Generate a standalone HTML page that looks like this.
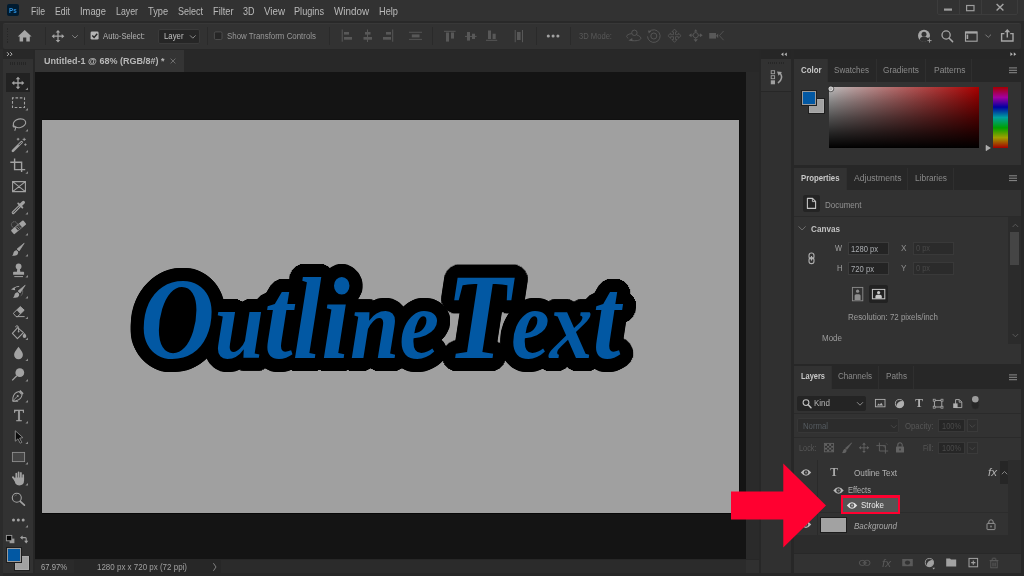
<!DOCTYPE html>
<html lang="en"><head><meta charset="utf-8"><title>Photoshop - Outline Text</title>
<style>
html,body{margin:0;padding:0;}
body{width:1024px;height:576px;overflow:hidden;background:#272727;position:relative;font-family:"Liberation Sans",sans-serif;}
.r{position:absolute;}
.t{position:absolute;white-space:nowrap;line-height:1;transform-origin:0 50%;font-family:"Liberation Sans",sans-serif;}
.s{font-family:"Liberation Serif",serif;}
.i{position:absolute;overflow:visible;}
#app{position:absolute;left:0;top:0;width:1024px;height:576px;will-change:transform;}
</style></head>
<body>
<div id="app">
<div class="r" style="left:0px;top:0px;width:1024px;height:21px;background:#323232;"></div>
<div class="r" style="left:0px;top:21px;width:1024px;height:28px;background:#292929;"></div>
<div class="r" style="left:2.6px;top:22.6px;width:1018.8px;height:26.2px;background:#323232;border-top:1px solid #383838;box-sizing:border-box;border-radius:2px;"></div>
<div class="r" style="left:936.8px;top:-1px;width:81.7px;height:15.5px;background:#323232;border:1px solid #3c3c3c;box-sizing:border-box;border-radius:0 0 2px 2px;"></div>
<div class="r" style="left:959px;top:0px;width:1px;height:14px;background:#3c3c3c;"></div>
<div class="r" style="left:981px;top:0px;width:1px;height:14px;background:#3c3c3c;"></div>
<div class="r" style="left:0px;top:49px;width:1024px;height:527px;background:#272727;"></div>
<div class="r" style="left:0px;top:49px;width:3px;height:527px;background:#2b2b2b;"></div>
<div class="r" style="left:3px;top:50px;width:30px;height:8.5px;background:#282828;"></div>
<div class="r" style="left:3px;top:59px;width:30px;height:514px;background:#323232;"></div>
<div class="r" style="left:35px;top:49.5px;width:724px;height:22.7px;background:#282828;"></div>
<div class="r" style="left:35px;top:49.5px;width:149px;height:22.7px;background:#343434;"></div>
<div class="r" style="left:35px;top:72.2px;width:711px;height:487.3px;background:#141414;"></div>
<div class="r" style="left:746px;top:72.2px;width:13px;height:487.3px;background:#2a2a2a;"></div>
<div class="r" style="left:35px;top:559.5px;width:724px;height:13.5px;background:#2b2b2b;"></div>
<div class="r" style="left:746px;top:559.5px;width:13px;height:13.5px;background:#303030;"></div>
<div class="r" style="left:35px;top:559.5px;width:38.5px;height:13.5px;background:#2a2a2a;"></div>
<div class="r" style="left:73.5px;top:559.5px;width:147.5px;height:13.5px;background:#272727;"></div>
<div class="r" style="left:42px;top:120px;width:697px;height:393px;background:#a0a0a0;box-shadow:0 1px 0 0 #080808,1px 0 0 0 #0c0c0c,-1px 0 0 0 #101010,0 -1px 0 0 #101010;"></div>
<div class="r" style="left:761.3px;top:49.5px;width:29.9px;height:9.0px;background:#262626;"></div>
<div class="r" style="left:761.3px;top:59px;width:29.9px;height:31.8px;background:#323232;"></div>
<div class="r" style="left:761.3px;top:92px;width:29.9px;height:481px;background:#303030;"></div>
<div class="r" style="left:794px;top:49.5px;width:227px;height:9.0px;background:#262626;"></div>
<div class="r" style="left:794px;top:59px;width:227.3px;height:22.5px;background:#272727;"></div>
<div class="r" style="left:794px;top:59px;width:33px;height:22.5px;background:#323232;"></div>
<div class="r" style="left:794px;top:81.5px;width:227px;height:83.5px;background:#323232;"></div>
<div class="r" style="left:794px;top:167.5px;width:227px;height:22.0px;background:#272727;"></div>
<div class="r" style="left:794px;top:167.5px;width:52px;height:22.0px;background:#323232;"></div>
<div class="r" style="left:794px;top:189.5px;width:227px;height:174.0px;background:#323232;"></div>
<div class="r" style="left:794px;top:366px;width:227px;height:22.5px;background:#272727;"></div>
<div class="r" style="left:794px;top:366px;width:37px;height:22.5px;background:#323232;"></div>
<div class="r" style="left:794px;top:388.5px;width:227px;height:184.5px;background:#323232;"></div>
<div class="r" style="left:826.5px;top:59px;width:1.0px;height:22.5px;background:#2f2f2f;"></div>
<div class="r" style="left:875.5px;top:59px;width:1.0px;height:22.5px;background:#2f2f2f;"></div>
<div class="r" style="left:925.0px;top:59px;width:1.0px;height:22.5px;background:#2f2f2f;"></div>
<div class="r" style="left:971.0px;top:59px;width:1.0px;height:22.5px;background:#2f2f2f;"></div>
<div class="r" style="left:845.5px;top:167.5px;width:1.0px;height:22.0px;background:#2f2f2f;"></div>
<div class="r" style="left:906.5px;top:167.5px;width:1.0px;height:22.0px;background:#2f2f2f;"></div>
<div class="r" style="left:953.0px;top:167.5px;width:1.0px;height:22.0px;background:#2f2f2f;"></div>
<div class="r" style="left:830.5px;top:366px;width:1.0px;height:22.5px;background:#2f2f2f;"></div>
<div class="r" style="left:878.0px;top:366px;width:1.0px;height:22.5px;background:#2f2f2f;"></div>
<div class="r" style="left:913.0px;top:366px;width:1.0px;height:22.5px;background:#2f2f2f;"></div>
<div class="r" style="left:6.5px;top:4.2px;width:12.5px;height:12.0px;background:#001b30;border-radius:2px;"></div>
<div class="r" style="left:44.5px;top:27px;width:1.0px;height:18px;background:#2a2a2a;"></div>
<div class="r" style="left:83.5px;top:27px;width:1.0px;height:18px;background:#2a2a2a;"></div>
<div class="r" style="left:206.5px;top:27px;width:1.0px;height:18px;background:#2a2a2a;"></div>
<div class="r" style="left:329.0px;top:27px;width:1.0px;height:18px;background:#2a2a2a;"></div>
<div class="r" style="left:432.0px;top:27px;width:1.0px;height:18px;background:#2a2a2a;"></div>
<div class="r" style="left:535.5px;top:27px;width:1.0px;height:18px;background:#2a2a2a;"></div>
<div class="r" style="left:570.0px;top:27px;width:1.0px;height:18px;background:#2a2a2a;"></div>
<div class="r" style="left:157.5px;top:29px;width:42.5px;height:15px;background:#262626;border:1px solid #3a3a3a;box-sizing:border-box;border-radius:2px;"></div>
<div class="r" style="left:807.5px;top:97.5px;width:17.5px;height:16.5px;background:#1e1e1e;"></div>
<div class="r" style="left:808.5px;top:98.5px;width:15.5px;height:14.5px;background:#a2a2a2;border:1px solid #acacac;box-sizing:border-box;"></div>
<div class="r" style="left:800.5px;top:89.5px;width:16.5px;height:16.5px;background:#1e1e1e;"></div>
<div class="r" style="left:801.5px;top:90.5px;width:14.5px;height:14.5px;background:#0258a3;border:1px solid #9a9a9a;box-sizing:border-box;"></div>
<div class="r" style="left:829px;top:87px;width:150px;height:61px;background:#000;background:linear-gradient(to bottom,rgba(0,0,0,0) 0%,rgba(0,0,0,0.3) 25%,rgba(0,0,0,0.57) 50%,rgba(0,0,0,0.8) 75%,#000 100%),linear-gradient(to right,#bcbcbc,#a80000);"></div>
<div class="r" style="left:993px;top:87px;width:15px;height:61px;background:#000;background:linear-gradient(to bottom,#a40000 0%,#a400a0 17%,#0000a0 33%,#00a0a0 50%,#00a000 67%,#a0a000 83%,#a40000 100%);"></div>
<div class="r" style="left:802.5px;top:195px;width:17.5px;height:17px;background:#242424;border-radius:2px;"></div>
<div class="r" style="left:794px;top:215.5px;width:227px;height:1.0px;background:#2a2a2a;"></div>
<div class="r" style="left:1008px;top:217px;width:13px;height:126.5px;background:#2b2b2b;"></div>
<div class="r" style="left:1009.5px;top:231.5px;width:9.5px;height:33.5px;background:#454545;"></div>
<div class="r" style="left:847.5px;top:241.5px;width:41.5px;height:13.0px;background:#242424;border:1px solid #3c3c3c;box-sizing:border-box;"></div>
<div class="r" style="left:847.5px;top:261.5px;width:41.5px;height:13.0px;background:#242424;border:1px solid #3c3c3c;box-sizing:border-box;"></div>
<div class="r" style="left:912.5px;top:241.5px;width:41.5px;height:13.0px;background:#2b2b2b;border:1px solid #393939;box-sizing:border-box;"></div>
<div class="r" style="left:912.5px;top:261.5px;width:41.5px;height:13.0px;background:#2b2b2b;border:1px solid #393939;box-sizing:border-box;"></div>
<div class="r" style="left:869px;top:284.5px;width:19px;height:18.5px;background:#222222;border-radius:2px;"></div>
<div class="r" style="left:797px;top:396px;width:68.5px;height:15px;background:#242424;border-radius:2px;"></div>
<div class="r" style="left:794px;top:413px;width:227px;height:1px;background:#2a2a2a;"></div>
<div class="r" style="left:797px;top:418px;width:102px;height:15px;background:#2c2c2c;border:1px solid #373737;box-sizing:border-box;border-radius:2px;"></div>
<div class="r" style="left:938px;top:419px;width:27px;height:12.5px;background:#262626;border:1px solid #383838;box-sizing:border-box;"></div>
<div class="r" style="left:967px;top:419px;width:10.5px;height:12.5px;background:#2e2e2e;border:1px solid #3a3a3a;box-sizing:border-box;"></div>
<div class="r" style="left:794px;top:436.5px;width:227px;height:1.0px;background:#2a2a2a;"></div>
<div class="r" style="left:938px;top:442px;width:27px;height:12px;background:#262626;border:1px solid #383838;box-sizing:border-box;"></div>
<div class="r" style="left:967px;top:442px;width:10.5px;height:12px;background:#2e2e2e;border:1px solid #3a3a3a;box-sizing:border-box;"></div>
<div class="r" style="left:794px;top:459.5px;width:227px;height:93.5px;background:#2c2c2c;"></div>
<div class="r" style="left:794px;top:460px;width:213.7px;height:52.3px;background:#323232;"></div>
<div class="r" style="left:794px;top:513px;width:213.7px;height:22px;background:#323232;"></div>
<div class="r" style="left:817px;top:460px;width:1px;height:74.5px;background:#2a2a2a;"></div>
<div class="r" style="left:1000px;top:460.5px;width:7.7px;height:23.5px;background:#262626;"></div>
<div class="r" style="left:1007.7px;top:459.5px;width:13.3px;height:93.5px;background:#2c2c2c;"></div>
<div class="r" style="left:840.5px;top:495px;width:59.5px;height:19px;background:#ff0030;"></div>
<div class="r" style="left:843px;top:497.5px;width:54.5px;height:14.0px;background:#555555;"></div>
<div class="r" style="left:820px;top:516.5px;width:27px;height:16.5px;background:#1c1c1c;"></div>
<div class="r" style="left:821px;top:517.5px;width:25px;height:14.5px;background:#a2a2a2;"></div>
<div class="r" style="left:794px;top:553px;width:227px;height:1px;background:#282828;"></div>
<div class="r" style="left:794px;top:554px;width:227px;height:19px;background:#323232;"></div>
<div class="r" style="left:10.2px;top:62.3px;width:1.0px;height:2.3px;background:#252525;"></div>
<div class="r" style="left:12.299999999999999px;top:62.3px;width:1.0px;height:2.3px;background:#252525;"></div>
<div class="r" style="left:14.399999999999999px;top:62.3px;width:1.0px;height:2.3px;background:#252525;"></div>
<div class="r" style="left:16.5px;top:62.3px;width:1.0px;height:2.3px;background:#252525;"></div>
<div class="r" style="left:18.6px;top:62.3px;width:1.0px;height:2.3px;background:#252525;"></div>
<div class="r" style="left:20.7px;top:62.3px;width:1.0px;height:2.3px;background:#252525;"></div>
<div class="r" style="left:22.8px;top:62.3px;width:1.0px;height:2.3px;background:#252525;"></div>
<div class="r" style="left:24.9px;top:62.3px;width:1.0px;height:2.3px;background:#252525;"></div>
<div class="r" style="left:6px;top:73px;width:24px;height:18.5px;background:#222222;"></div>
<div class="r" style="left:14px;top:555.5px;width:15.5px;height:15.0px;background:#1e1e1e;"></div>
<div class="r" style="left:14.8px;top:556.3px;width:14.0px;height:13.5px;background:#a2a2a2;border:1px solid #acacac;box-sizing:border-box;"></div>
<div class="r" style="left:5.8px;top:547.3px;width:15.8px;height:15.4px;background:#1e1e1e;"></div>
<div class="r" style="left:6.6px;top:548px;width:14.3px;height:14px;background:#0258a3;border:1px solid #9a9a9a;box-sizing:border-box;"></div>
<div class="r" style="left:6.6px;top:28.4px;width:1.0px;height:1.2px;background:#262626;"></div>
<div class="r" style="left:6.6px;top:31.0px;width:1.0px;height:1.2px;background:#262626;"></div>
<div class="r" style="left:6.6px;top:33.6px;width:1.0px;height:1.2px;background:#262626;"></div>
<div class="r" style="left:6.6px;top:36.2px;width:1.0px;height:1.2px;background:#262626;"></div>
<div class="r" style="left:6.6px;top:38.8px;width:1.0px;height:1.2px;background:#262626;"></div>
<div class="r" style="left:6.6px;top:41.4px;width:1.0px;height:1.2px;background:#262626;"></div>
<div class="r" style="left:768.0px;top:62.3px;width:1.0px;height:2.1px;background:#262626;"></div>
<div class="r" style="left:770.1px;top:62.3px;width:1.0px;height:2.1px;background:#262626;"></div>
<div class="r" style="left:772.2px;top:62.3px;width:1.0px;height:2.1px;background:#262626;"></div>
<div class="r" style="left:774.3px;top:62.3px;width:1.0px;height:2.1px;background:#262626;"></div>
<div class="r" style="left:776.4px;top:62.3px;width:1.0px;height:2.1px;background:#262626;"></div>
<div class="r" style="left:778.5px;top:62.3px;width:1.0px;height:2.1px;background:#262626;"></div>
<div class="r" style="left:780.6px;top:62.3px;width:1.0px;height:2.1px;background:#262626;"></div>
<div class="r" style="left:782.7px;top:62.3px;width:1.0px;height:2.1px;background:#262626;"></div>
<span class="t" style="left:30.5px;top:6.03px;font-size:10.5px;color:#bababa;transform:scaleX(0.827);">File</span>
<span class="t" style="left:55px;top:6.03px;font-size:10.5px;color:#bababa;transform:scaleX(0.829);">Edit</span>
<span class="t" style="left:80px;top:6.03px;font-size:10.5px;color:#bababa;transform:scaleX(0.891);">Image</span>
<span class="t" style="left:116px;top:6.03px;font-size:10.5px;color:#bababa;transform:scaleX(0.838);">Layer</span>
<span class="t" style="left:148px;top:6.03px;font-size:10.5px;color:#bababa;transform:scaleX(0.879);">Type</span>
<span class="t" style="left:178px;top:6.03px;font-size:10.5px;color:#bababa;transform:scaleX(0.857);">Select</span>
<span class="t" style="left:212.5px;top:6.03px;font-size:10.5px;color:#bababa;transform:scaleX(0.878);">Filter</span>
<span class="t" style="left:242.5px;top:6.03px;font-size:10.5px;color:#bababa;transform:scaleX(0.856);">3D</span>
<span class="t" style="left:264px;top:6.03px;font-size:10.5px;color:#bababa;transform:scaleX(0.930);">View</span>
<span class="t" style="left:294px;top:6.03px;font-size:10.5px;color:#bababa;transform:scaleX(0.871);">Plugins</span>
<span class="t" style="left:334px;top:6.03px;font-size:10.5px;color:#bababa;transform:scaleX(0.937);">Window</span>
<span class="t" style="left:379px;top:6.03px;font-size:10.5px;color:#bababa;transform:scaleX(0.879);">Help</span>
<span class="t" style="left:9.3px;top:7.15px;font-size:7.5px;color:#2a8fdc;font-weight:bold;transform:scaleX(0.838);">Ps</span>
<span class="t" style="left:103px;top:32.49px;font-size:8.9px;color:#b4b4b4;transform:scaleX(0.868);">Auto-Select:</span>
<span class="t" style="left:164px;top:32.49px;font-size:8.9px;color:#c0c0c0;transform:scaleX(0.878);">Layer</span>
<span class="t" style="left:227px;top:32.49px;font-size:8.9px;color:#989898;transform:scaleX(0.889);">Show Transform Controls</span>
<span class="t" style="left:579px;top:32.49px;font-size:8.9px;color:#585858;transform:scaleX(0.857);">3D Mode:</span>
<span class="t" style="left:43.5px;top:56.99px;font-size:8.9px;color:#b8b8b8;font-weight:bold;transform:scaleX(1.016);">Untitled-1 @ 68% (RGB/8#) *</span>
<span class="t" style="left:41px;top:563.44px;font-size:9px;color:#a8a8a8;transform:scaleX(0.852);">67.97%</span>
<span class="t" style="left:97px;top:563.44px;font-size:9px;color:#a0a0a0;transform:scaleX(0.886);">1280 px x 720 px (72 ppi)</span>
<span class="t" style="left:800.5px;top:65.79px;font-size:8.9px;color:#c8c8c8;font-weight:bold;transform:scaleX(0.885);">Color</span>
<span class="t" style="left:834px;top:65.79px;font-size:8.9px;color:#8a8a8a;transform:scaleX(0.909);">Swatches</span>
<span class="t" style="left:883px;top:65.79px;font-size:8.9px;color:#8a8a8a;transform:scaleX(0.935);">Gradients</span>
<span class="t" style="left:933.5px;top:65.79px;font-size:8.9px;color:#8a8a8a;transform:scaleX(0.953);">Patterns</span>
<span class="t" style="left:801px;top:173.79px;font-size:8.9px;color:#c8c8c8;font-weight:bold;transform:scaleX(0.877);">Properties</span>
<span class="t" style="left:853.5px;top:173.79px;font-size:8.9px;color:#8a8a8a;transform:scaleX(0.972);">Adjustments</span>
<span class="t" style="left:915px;top:173.79px;font-size:8.9px;color:#8a8a8a;transform:scaleX(0.940);">Libraries</span>
<span class="t" style="left:824.5px;top:200.99px;font-size:8.9px;color:#929292;transform:scaleX(0.902);">Document</span>
<span class="t" style="left:811px;top:225.29px;font-size:8.9px;color:#c2c2c2;font-weight:bold;transform:scaleX(0.918);">Canvas</span>
<span class="t" style="left:835px;top:244.49px;font-size:8.9px;color:#a0a0a0;transform:scaleX(0.834);">W</span>
<span class="t" style="left:836.5px;top:264.49px;font-size:8.9px;color:#a0a0a0;transform:scaleX(0.856);">H</span>
<span class="t" style="left:901px;top:244.49px;font-size:8.9px;color:#8c8c8c;transform:scaleX(0.929);">X</span>
<span class="t" style="left:901px;top:264.49px;font-size:8.9px;color:#8c8c8c;transform:scaleX(0.929);">Y</span>
<span class="t" style="left:851px;top:244.79px;font-size:8.9px;color:#a9acb0;transform:scaleX(0.855);">1280 px</span>
<span class="t" style="left:851px;top:264.79px;font-size:8.9px;color:#a9acb0;transform:scaleX(0.863);">720 px</span>
<span class="t" style="left:916px;top:244.49px;font-size:8.9px;color:#484848;transform:scaleX(0.834);">0 px</span>
<span class="t" style="left:916px;top:264.49px;font-size:8.9px;color:#484848;transform:scaleX(0.834);">0 px</span>
<span class="t" style="left:848px;top:313.49px;font-size:8.9px;color:#9c9c9c;transform:scaleX(0.894);">Resolution: 72 pixels/inch</span>
<span class="t" style="left:822px;top:333.99px;font-size:8.9px;color:#9c9c9c;transform:scaleX(0.901);">Mode</span>
<span class="t" style="left:800.5px;top:372.29px;font-size:8.9px;color:#c8c8c8;font-weight:bold;transform:scaleX(0.838);">Layers</span>
<span class="t" style="left:838px;top:372.29px;font-size:8.9px;color:#8a8a8a;transform:scaleX(0.907);">Channels</span>
<span class="t" style="left:886px;top:372.29px;font-size:8.9px;color:#8a8a8a;transform:scaleX(0.925);">Paths</span>
<span class="t" style="left:814px;top:399.49px;font-size:8.9px;color:#b4b4b4;transform:scaleX(0.901);">Kind</span>
<span class="t" style="left:803px;top:421.99px;font-size:8.9px;color:#555b60;transform:scaleX(0.874);">Normal</span>
<span class="t" style="left:904.5px;top:421.99px;font-size:8.9px;color:#565656;transform:scaleX(0.875);">Opacity:</span>
<span class="t" style="left:942px;top:421.99px;font-size:8.9px;color:#4a4a4a;transform:scaleX(0.837);">100%</span>
<span class="t" style="left:798.5px;top:444.49px;font-size:8.9px;color:#565656;transform:scaleX(0.825);">Lock:</span>
<span class="t" style="left:922.5px;top:444.49px;font-size:8.9px;color:#565656;transform:scaleX(0.760);">Fill:</span>
<span class="t" style="left:942px;top:444.49px;font-size:8.9px;color:#4a4a4a;transform:scaleX(0.837);">100%</span>
<span class="t" style="left:853.5px;top:469.19px;font-size:8.9px;color:#b0b0b0;transform:scaleX(0.921);">Outline Text</span>
<span class="t" style="left:848px;top:485.79px;font-size:8.9px;color:#b0b0b0;transform:scaleX(0.853);">Effects</span>
<span class="t" style="left:861px;top:501.39px;font-size:8.9px;color:#ececec;transform:scaleX(0.896);">Stroke</span>
<span class="t" style="left:854px;top:521.69px;font-size:8.9px;color:#a8a8a8;font-style:italic;transform:scaleX(0.908);">Background</span>
<span class="t" style="left:987.8px;top:466.99px;font-size:11.5px;color:#b0b0b0;font-style:italic;transform:scaleX(1.005);">fx</span>
<span class="t" style="left:882px;top:557.99px;font-size:11.5px;color:#5a5a5a;font-style:italic;transform:scaleX(1.005);">fx</span>
<svg class="i" style="left:0;top:0" width="1024" height="576" viewBox="0 0 1024 576">
<filter id="ol" filterUnits="userSpaceOnUse" x="100" y="230" width="570" height="180" color-interpolation-filters="sRGB">
<feMorphology in="SourceAlpha" operator="dilate" radius="13 1" result="k0"/>
<feMorphology in="SourceAlpha" operator="dilate" radius="12 5" result="k1"/>
<feMorphology in="SourceAlpha" operator="dilate" radius="11 7" result="k2"/>
<feMorphology in="SourceAlpha" operator="dilate" radius="9 9" result="k3"/>
<feMorphology in="SourceAlpha" operator="dilate" radius="7 11" result="k4"/>
<feMorphology in="SourceAlpha" operator="dilate" radius="5 12" result="k5"/>
<feMorphology in="SourceAlpha" operator="dilate" radius="1 13" result="k6"/>
<feMorphology in="SourceAlpha" operator="dilate" radius="13 3" result="k7"/>
<feMorphology in="SourceAlpha" operator="dilate" radius="3 13" result="k8"/>
<feMorphology in="SourceAlpha" operator="dilate" radius="10 8" result="k9"/>
<feMorphology in="SourceAlpha" operator="dilate" radius="8 10" result="k10"/>
<feMerge result="m"><feMergeNode in="k0"/><feMergeNode in="k1"/><feMergeNode in="k2"/><feMergeNode in="k3"/><feMergeNode in="k4"/><feMergeNode in="k5"/><feMergeNode in="k6"/><feMergeNode in="k7"/><feMergeNode in="k8"/><feMergeNode in="k9"/><feMergeNode in="k10"/></feMerge>
<feGaussianBlur in="m" stdDeviation="0.6" result="mb"/>
<feMerge><feMergeNode in="mb"/><feMergeNode in="SourceGraphic"/></feMerge>
</filter>
<g filter="url(#ol)" font-family="'Liberation Serif',serif" font-weight="bold" font-style="italic" font-size="116" fill="#0258a3">
<ellipse cx="179" cy="319" rx="4" ry="14" transform="rotate(12 179 319)" fill="#000"/>
<text x="140" y="358" textLength="299" lengthAdjust="spacingAndGlyphs">O<tspan font-size="100">u</tspan>tli<tspan font-size="100">ne</tspan></text>
<text x="446.5" y="358" textLength="174" lengthAdjust="spacingAndGlyphs" font-size="123">T<tspan font-size="100">ex</tspan><tspan font-size="116">t</tspan></text>
</g>
</svg>
<svg class="i" style="left:0;top:0" width="1024" height="576" viewBox="0 0 1024 576"><path d="M7,52.2 l1.9,1.9 -1.9,1.9 M10.2,52.2 l1.9,1.9 -1.9,1.9" stroke="#b0b0b0" stroke-width="1" fill="none"/><g transform="translate(18,83)" ><path d="M0,-4.5V4.5M-4.5,0H4.5" stroke="#a2a2a2" stroke-width="1.3" fill="none"/><path d="M0,-6.3 l2.3,2.6 h-4.6z M0,6.3 l2.3,-2.6 h-4.6z M-6.3,0 l2.6,-2.3 v4.6z M6.3,0 l-2.6,-2.3 v4.6z" fill="#a2a2a2"/></g><path d="M28.0,87.4 v2.6 h-2.6z" fill="#8a8a8a"/><g transform="translate(18.5,102.7)" ><rect x="-6" y="-4.8" width="12" height="9.6" fill="none" stroke="#a2a2a2" stroke-width="1.1" stroke-dasharray="2.6 1.7" stroke-dashoffset="1.3"/></g><path d="M28.0,108 v2.6 h-2.6z" fill="#8a8a8a"/><g transform="translate(19.5,123.3)" ><ellipse cx="0" cy="0" rx="6.3" ry="4.3" transform="rotate(-14)" fill="none" stroke="#a2a2a2" stroke-width="1.1"/><path d="M-5.6,1.2 c-1.6,1.2 -0.6,3 1.4,2.4 M-3.6,3.2 c-0.3,1.8 -0.6,3 -1.2,4.2" fill="none" stroke="#a2a2a2" stroke-width="1.1"/></g><path d="M28.0,129 v2.6 h-2.6z" fill="#8a8a8a"/><g transform="translate(0,0)" ><path d="M12.9,150.8 L21.6,142.1" stroke="#a2a2a2" stroke-width="2.6" stroke-linecap="round"/><path d="M18.9,144.9 L21.5,142.3" stroke="#323232" stroke-width="1" stroke-linecap="round"/><path d="M16.8,139.2h2.6M18.1,137.9v2.6 M22.6,139.4h3.2M24.2,137.8v3.2 M24.2,144.6h2.4M25.4,143.4v2.4" stroke="#a2a2a2" stroke-width="0.9"/></g><path d="M28.0,150 v2.6 h-2.6z" fill="#8a8a8a"/><g transform="translate(0,0)" ><path d="M10.3,162.2 H21.6 V172 M14.6,158.4 V169.6 H25.2" fill="none" stroke="#a2a2a2" stroke-width="1.4"/></g><path d="M28.0,171.2 v2.6 h-2.6z" fill="#8a8a8a"/><g transform="translate(0,0)" ><path d="M12.6,181.6 H25.4 V191.6 H12.6Z M12.6,181.6 L25.4,191.6 M25.4,181.6 L12.6,191.6" fill="none" stroke="#a2a2a2" stroke-width="1.1"/></g><g transform="translate(0,0)" ><path d="M13.2,212.6 L19.6,206.2" stroke="#a2a2a2" stroke-width="3" stroke-linecap="round"/><path d="M13.4,212.4 L19.4,206.4" stroke="#323232" stroke-width="1" stroke-linecap="round"/><path d="M18.2,203.4 L22.4,207.6" stroke="#a2a2a2" stroke-width="1.8" stroke-linecap="round"/><path d="M20.6,205.2 L23.4,202.4" stroke="#a2a2a2" stroke-width="3.2" stroke-linecap="round"/></g><path d="M28.0,212 v2.6 h-2.6z" fill="#8a8a8a"/><g transform="translate(18.6,227.3)" ><g transform="rotate(-40)"><rect x="-8" y="-2.7" width="16" height="5.4" rx="1" fill="#a2a2a2"/><rect x="-2.6" y="-2.1" width="5.2" height="4.2" fill="#323232"/><circle cx="-1.1" cy="-0.9" r="0.55" fill="#a2a2a2"/><circle cx="1.1" cy="-0.9" r="0.55" fill="#a2a2a2"/><circle cx="-1.1" cy="0.9" r="0.55" fill="#a2a2a2"/><circle cx="1.1" cy="0.9" r="0.55" fill="#a2a2a2"/></g><circle cx="-4.2" cy="-2.6" r="3" fill="none" stroke="#a2a2a2" stroke-width="0.7" stroke-dasharray="1.1 1"/></g><path d="M28.0,233 v2.6 h-2.6z" fill="#8a8a8a"/><g transform="translate(0,0)" ><path d="M24.2,243.2 L19.1,251 L17,249.1Z" fill="#a2a2a2" stroke="#a2a2a2" stroke-width="0.7" stroke-linejoin="round"/><path d="M17.9,251.4 c0.9,2 -0.6,3.9 -2.4,4.2 c-1.4,0.3 -2.6,0.2 -3.6,0.2 c1.2,-0.8 1.3,-1.8 1.7,-3.2 c0.5,-1.6 2.2,-2.6 3.3,-2.2z" fill="#a2a2a2"/></g><path d="M28.0,254 v2.6 h-2.6z" fill="#8a8a8a"/><g transform="translate(0,0)" ><circle cx="18.6" cy="266.4" r="2.9" fill="#a2a2a2"/><path d="M17.4,268 h2.4 l0.5,3.8 h3 q0.8,0 0.8,0.8 v2.2 h-11 v-2.2 q0,-0.8 0.8,-0.8 h3z" fill="#a2a2a2"/><path d="M14.3,276.6 H23" stroke="#a2a2a2" stroke-width="1"/></g><path d="M28.0,275 v2.6 h-2.6z" fill="#8a8a8a"/><g transform="translate(1,42)" ><path d="M24.2,243.2 L19.1,251 L17,249.1Z" fill="#a2a2a2" stroke="#a2a2a2" stroke-width="0.7" stroke-linejoin="round"/><path d="M17.9,251.4 c0.9,2 -0.6,3.9 -2.4,4.2 c-1.4,0.3 -2.6,0.2 -3.6,0.2 c1.2,-0.8 1.3,-1.8 1.7,-3.2 c0.5,-1.6 2.2,-2.6 3.3,-2.2z" fill="#a2a2a2"/></g><g transform="translate(0,0)" ><path d="M11,289.6 l3.6,-2.6 0.6,3.2z" fill="#a2a2a2"/><path d="M14.2,288.2 a6.5,6.5 0 0 1 5,-1.8" fill="none" stroke="#a2a2a2" stroke-width="0.9"/><path d="M22.6,290.6 a6.5,6.5 0 0 1 -2,5.6" fill="none" stroke="#a2a2a2" stroke-width="0.8" stroke-dasharray="1 1"/></g><path d="M28.0,296 v2.6 h-2.6z" fill="#8a8a8a"/><g transform="translate(0,0)" ><path d="M13.3,313.3 L20.3,306.6 L24.2,310.2 L17.6,316.6 H16Z" fill="none" stroke="#a2a2a2" stroke-width="1" stroke-linejoin="round"/><path d="M16.6,310.1 L20.3,306.6 L24.2,310.2 L20.4,313.9Z" fill="#a2a2a2"/><path d="M16,316.6 H24.6" stroke="#a2a2a2" stroke-width="1"/></g><path d="M28.0,316.5 v2.6 h-2.6z" fill="#8a8a8a"/><g transform="translate(0,0)" ><path d="M12.4,333.4 L17.6,327.6 L23.4,332.6 L17.4,338.6Z" fill="none" stroke="#a2a2a2" stroke-width="1.1" stroke-linejoin="round"/><path d="M18.6,331.6 V327.6 q-0.2,-2 -2,-1.8 q-1.4,0.3 -0.6,1.6" fill="none" stroke="#a2a2a2" stroke-width="1"/><circle cx="18.6" cy="331.6" r="0.9" fill="#a2a2a2"/><path d="M24.5,333 c1.2,1.4 1.8,2.4 1.8,3.2 a1.8,1.8 0 0 1 -3.6,0 c0,-0.8 0.6,-1.8 1.8,-3.2z" fill="#a2a2a2"/></g><path d="M28.0,337.5 v2.6 h-2.6z" fill="#8a8a8a"/><g transform="translate(0,0)" ><path d="M18.5,346.8 c2.6,3.6 4.4,5.8 4.4,8 a4.4,4.4 0 0 1 -8.8,0 c0,-2.2 1.8,-4.4 4.4,-8z" fill="#a2a2a2"/></g><path d="M28.0,358.5 v2.6 h-2.6z" fill="#8a8a8a"/><g transform="translate(0,0)" ><circle cx="19.8" cy="372.7" r="4.4" fill="#a2a2a2"/><path d="M16.8,375.8 L12.2,380.4" stroke="#a2a2a2" stroke-width="1.3"/></g><path d="M28.0,379 v2.6 h-2.6z" fill="#8a8a8a"/><g transform="translate(18.3,395.4)" ><g transform="rotate(45)"><path d="M-2.3,-5.2 h4.6 v1.6 h-4.6z" fill="#a2a2a2"/><path d="M-2.2,-3.2 h4.4 c1.8,2.6 2.2,5 0,8.6 l-2.2,2.4 l-2.2,-2.4 c-2.2,-3.6 -1.8,-6 0,-8.6z" fill="none" stroke="#a2a2a2" stroke-width="1" stroke-linejoin="round"/><path d="M0,7.6 V1.6" stroke="#a2a2a2" stroke-width="0.8"/><circle cx="0" cy="0.8" r="1" fill="#a2a2a2"/></g><path d="M-5.6,5.9 h5.4" stroke="#a2a2a2" stroke-width="0.9"/></g><path d="M28.0,400 v2.6 h-2.6z" fill="#8a8a8a"/><text x="19" y="421.2" text-anchor="middle" font-family="'Liberation Serif',serif" font-size="16.4" fill="#a2a2a2" stroke="#a2a2a2" stroke-width="0.55">T</text><path d="M28.0,421 v2.6 h-2.6z" fill="#8a8a8a"/><g transform="translate(0,0)" ><path d="M15.3,430.8 V441.2 L17.9,438.9 L20.2,443.2 L21.8,442.4 L19.6,438.2 L22.9,437.6Z" fill="#0c0c0c" stroke="#8e8e8e" stroke-width="0.9" stroke-linejoin="round"/></g><path d="M28.0,441.5 v2.6 h-2.6z" fill="#8a8a8a"/><g transform="translate(0,0)" ><rect x="12.4" y="452.4" width="12.2" height="9.2" fill="#454545" stroke="#8e8e8e" stroke-width="0.9"/></g><path d="M28.0,462 v2.6 h-2.6z" fill="#8a8a8a"/><g transform="translate(0,0)" ><path d="M16.3,479 V473.6 M18.6,478.6 V472.4 M20.9,478.6 V472.9 M23.2,479.4 V475.1" stroke="#a2a2a2" stroke-width="1.7" stroke-linecap="round" fill="none"/><path d="M12.9,477.2 L15.6,480.6" stroke="#a2a2a2" stroke-width="1.9" stroke-linecap="round"/><path d="M15.45,477.6 H24.05 V480.4 q0,2.6 -1.3,3.9 q-1.2,1.1 -3.4,1.1 q-2.6,0 -3.8,-1.7 L14.4,480.6z" fill="#a2a2a2"/></g><path d="M28.0,483 v2.6 h-2.6z" fill="#8a8a8a"/><g transform="translate(0,0)" ><circle cx="16.8" cy="497.8" r="4.5" fill="none" stroke="#a2a2a2" stroke-width="1.1"/><path d="M20.3,501.3 L24.4,505.1" stroke="#a2a2a2" stroke-width="1.7" stroke-linecap="round"/><path d="M14.6,496.4 a3,3 0 0 1 2.4,-1.6" fill="none" stroke="#7a7a7a" stroke-width="0.6"/></g><g transform="translate(0,0)" ><circle cx="13.5" cy="520" r="1.5" fill="#a2a2a2"/><circle cx="18.3" cy="520" r="1.5" fill="#a2a2a2"/><circle cx="23.2" cy="520" r="1.5" fill="#a2a2a2"/></g><path d="M28.0,525 v2.6 h-2.6z" fill="#8a8a8a"/><g transform="translate(0,0)" ><rect x="9.6" y="538.6" width="4.8" height="4.6" fill="#9a9a9a"/><rect x="6.4" y="535.4" width="5.4" height="5.4" fill="#050505" stroke="#9a9a9a" stroke-width="0.9"/></g><g transform="translate(0,0)" ><path d="M21.8,537.6 h3.4 q1,0 1,1 v3" fill="none" stroke="#a2a2a2" stroke-width="1.1"/><path d="M20,537.6 l2.6,-2.1 v4.2z M26.2,543.4 l-2.1,-2.6 h4.2z" fill="#a2a2a2"/></g><g transform="translate(0,0)" ><path d="M24.7,30 L31.6,36.4 H29.8 V41.6 H26.3 V37.6 H23.1 V41.6 H19.6 V36.4 H17.8Z" fill="#a6a6a6"/></g><g transform="translate(58,36.2)" ><path d="M0,-4.5V4.5M-4.5,0H4.5" stroke="#a6a6a6" stroke-width="1.2" fill="none"/><path d="M0,-6.3 l2.3,2.6 h-4.6z M0,6.3 l2.3,-2.6 h-4.6z M-6.3,0 l2.6,-2.3 v4.6z M6.3,0 l-2.6,-2.3 v4.6z" fill="#a6a6a6"/></g><path d="M72.2,35.2 l2.8,2.8 l2.8,-2.8" fill="none" stroke="#7e7e7e" stroke-width="1"/><g transform="translate(0,0)" ><rect x="90.6" y="31.6" width="8" height="8" rx="1.4" fill="#b4b4b4"/><path d="M92.3,35.6 l1.8,1.9 l3.1,-3.8" fill="none" stroke="#262626" stroke-width="1.4"/></g><path d="M190,35.4 l2.8,2.8 l2.8,-2.8" fill="none" stroke="#8a8a8a" stroke-width="1"/><g transform="translate(0,0)" ><rect x="214.4" y="31.9" width="7.6" height="7.6" rx="1.3" fill="#262626" stroke="#505050" stroke-width="0.9"/></g><rect x="341.7" y="29.5" width="1.0" height="12.2" fill="#585858"/><rect x="344" y="32" width="5" height="2.6" fill="#585858"/><rect x="344" y="37" width="8" height="2.7" fill="#585858"/><rect x="367" y="29.5" width="1" height="12.5" fill="#585858"/><rect x="365" y="32" width="5.5" height="2.6" fill="#585858"/><rect x="363.5" y="37" width="8.5" height="2.7" fill="#585858"/><rect x="392.2" y="29.5" width="1.0" height="12.2" fill="#585858"/><rect x="386" y="32" width="5" height="2.6" fill="#585858"/><rect x="383" y="37" width="8" height="2.7" fill="#585858"/><rect x="409" y="31.8" width="13" height="0.9" fill="#585858"/><rect x="409" y="38.9" width="13" height="0.9" fill="#585858"/><rect x="411.8" y="34.4" width="7.7" height="3.0" fill="#585858"/><rect x="444" y="30.8" width="11.6" height="1.0" fill="#585858"/><rect x="446" y="32.5" width="3" height="9.1" fill="#585858"/><rect x="451" y="32.5" width="3" height="6.1" fill="#585858"/><rect x="465" y="35.9" width="11.6" height="1.0" fill="#585858"/><rect x="467" y="32" width="3" height="8.6" fill="#585858"/><rect x="472" y="33.7" width="3" height="5.3" fill="#585858"/><rect x="486" y="39.8" width="11.2" height="1.0" fill="#585858"/><rect x="488" y="30.5" width="3" height="8.5" fill="#585858"/><rect x="492.6" y="33.7" width="3.1" height="5.3" fill="#585858"/><rect x="514.7" y="30" width="1.0" height="12.2" fill="#585858"/><rect x="522" y="30" width="1" height="12.2" fill="#585858"/><rect x="517" y="32" width="3.6" height="8" fill="#585858"/><g transform="translate(0,0)" ><circle cx="548.3" cy="36" r="1.55" fill="#a2a2a2"/><circle cx="553.1" cy="36" r="1.55" fill="#a2a2a2"/><circle cx="557.9" cy="36" r="1.55" fill="#a2a2a2"/></g><g transform="translate(0,0)" ><circle cx="634.4" cy="32.8" r="2.7" fill="none" stroke="#585858" stroke-width="0.9"/><path d="M631.6,33.6 c-4.5,0.6 -6.6,2.8 -3.4,4.6 M631,40.4 c5,1 10.4,-0.2 9.8,-2.4 c-0.2,-1.2 -1.6,-2.2 -3.8,-3" fill="none" stroke="#585858" stroke-width="0.9"/><path d="M628.4,40.6 l3.8,-2.6 l0.4,3.2z" fill="#585858"/></g><g transform="translate(653.8,36)" ><circle cx="0" cy="0" r="3" fill="none" stroke="#585858" stroke-width="0.9"/><path d="M-4.6,-4.2 A6.3,6.3 0 1 1 -6.3,0.4" fill="none" stroke="#585858" stroke-width="0.9"/><path d="M-5.8,-5.6 l3.4,0.6 l-2.6,2.4z" fill="#585858"/></g><g transform="translate(674.5,35.7)" ><path d="M0,-6.6 l2.6,2.8 h-1.6 v2.8 h2.8 v-1.6 l2.8,2.6 l-2.8,2.6 v-1.6 h-2.8 v2.8 h1.6 l-2.6,2.8 l-2.6,-2.8 h1.6 v-2.8 h-2.8 v1.6 l-2.8,-2.6 l2.8,-2.6 v1.6 h2.8 v-2.8 h-1.6z" fill="none" stroke="#585858" stroke-width="0.8" stroke-linejoin="round"/></g><g transform="translate(695.7,35.2)" ><circle cx="0" cy="0" r="2.6" fill="none" stroke="#585858" stroke-width="0.9"/><path d="M0,-6 l1.7,2.2 h-3.4z M0,6.8 l2.2,-2.8 h-4.4z M-7,0 l2.8,-2 v4z M7,0 l-2.8,-2 v4z" fill="#585858"/><path d="M0,-3.8v1.2 M0,2.6v1.4 M-4.2,0h1.6 M2.6,0h1.6" stroke="#585858" stroke-width="0.9"/></g><g transform="translate(0,0)" ><rect x="709.2" y="33" width="6.8" height="5.6" fill="#585858"/><path d="M716,35.8 l2.2,-2.4 v4.8z" fill="#585858"/><path d="M723.6,31 l-4.2,4.6 l4.2,4.6" fill="none" stroke="#585858" stroke-width="0.8"/></g><g transform="translate(924,35.8)" ><circle cx="0" cy="0" r="6" fill="#a6a6a6"/><circle cx="0" cy="-1.6" r="2.5" fill="#323232"/><path d="M-4.4,4.2 q0.4,-2.8 2.8,-3.2 h3.2 q2.4,0.4 2.8,3.2 q-2,1.9 -4.4,1.9 q-2.4,0 -4.4,-1.9z" fill="#323232"/><circle cx="5.4" cy="4.8" r="3" fill="#323232"/><path d="M3.4,4.8h4.2M5.5,2.7v4.2" stroke="#a6a6a6" stroke-width="0.9"/></g><g transform="translate(0,0)" ><circle cx="946.1" cy="35" r="4.1" fill="none" stroke="#a6a6a6" stroke-width="1.3"/><path d="M949.2,38.2 L952.6,41.6" stroke="#a6a6a6" stroke-width="1.5" stroke-linecap="round"/></g><g transform="translate(0,0)" ><rect x="965.5" y="32" width="11.6" height="9.2" fill="none" stroke="#a6a6a6" stroke-width="1.1"/><rect x="965.5" y="31.6" width="11.6" height="2" fill="#a6a6a6"/><rect x="966.6" y="34.6" width="1.6" height="4.4" fill="#a6a6a6"/></g><path d="M985.4,34.6 l2.8,2.8 l2.8,-2.8" fill="none" stroke="#7e7e7e" stroke-width="1"/><g transform="translate(0,0)" ><path d="M1004.4,33.6 H1001.6 V41 H1013 V33.6 H1010.2" fill="none" stroke="#a6a6a6" stroke-width="1.4"/><path d="M1007.3,31 V37.6" stroke="#a6a6a6" stroke-width="1.4"/><path d="M1007.3,29 l2.9,3.2 h-5.8z" fill="#a6a6a6"/></g><g transform="translate(0,0)" ><rect x="944" y="8.5" width="8" height="2.2" fill="#9c9c9c"/><rect x="966.6" y="5.5" width="7.4" height="5.2" fill="none" stroke="#9c9c9c" stroke-width="1.2"/><path d="M996.6,4 l6.8,6.6 M1003.4,4 l-6.8,6.6" stroke="#a4a4a4" stroke-width="1.4"/></g><g transform="translate(0,0)" ><path d="M170.6,58.6 l4.8,4.8 M175.4,58.6 l-4.8,4.8" stroke="#7c7c7c" stroke-width="0.8"/></g><g transform="translate(0,0)" ><path d="M213.4,563.2 l2.6,3.8 l-2.6,3.8" fill="none" stroke="#8a8a8a" stroke-width="0.9"/></g><g transform="translate(0,0)" ><path d="M783.4,52.4 l-2.4,1.9 l2.4,1.9z M786.8,52.4 l-2.4,1.9 l2.4,1.9z" fill="#b4b4b4"/></g><g transform="translate(0,0)" ><path d="M1010.4,52.3 l2.4,1.9 l-2.4,1.9z M1013.8,52.3 l2.4,1.9 l-2.4,1.9z" fill="#b4b4b4"/></g><g transform="translate(0,0)" ><rect x="771.2" y="70.7" width="3.4" height="3" fill="none" stroke="#a0a0a0" stroke-width="0.9"/><rect x="771.2" y="75.7" width="3.4" height="3" fill="none" stroke="#a0a0a0" stroke-width="0.9"/><rect x="770.8" y="80.3" width="4.2" height="4" fill="#a0a0a0"/><path d="M778.4,82.6 Q783.6,78.6 780.4,73.4" fill="none" stroke="#a0a0a0" stroke-width="1.5" stroke-linecap="round"/><path d="M777,71.5 l5,0.4 l-3.4,3.9z" fill="#a0a0a0"/></g><rect x="1009" y="67.4" width="8" height="1.0" fill="#8c8c8c"/><rect x="1009" y="69.80000000000001" width="8" height="1.0" fill="#8c8c8c"/><rect x="1009" y="72.2" width="8" height="1.0" fill="#8c8c8c"/><rect x="1009" y="175.3" width="8" height="1.0" fill="#8c8c8c"/><rect x="1009" y="177.70000000000002" width="8" height="1.0" fill="#8c8c8c"/><rect x="1009" y="180.10000000000002" width="8" height="1.0" fill="#8c8c8c"/><rect x="1009" y="374.4" width="8" height="1.0" fill="#8c8c8c"/><rect x="1009" y="376.79999999999995" width="8" height="1.0" fill="#8c8c8c"/><rect x="1009" y="379.2" width="8" height="1.0" fill="#8c8c8c"/><g transform="translate(0,0)" ><circle cx="830.8" cy="88.8" r="2" fill="none" stroke="#dcdcdc" stroke-width="1"/><circle cx="830.8" cy="88.8" r="3" fill="none" stroke="#2a2a2a" stroke-width="0.6"/></g><g transform="translate(0,0)" ><path d="M986,145.3 l4.4,2.7 l-4.4,2.7z" fill="#a8a8a8" stroke="#c8c8c8" stroke-width="0.5" stroke-linejoin="round"/></g><g transform="translate(0,0)" ><path d="M807.4,198.4 H812.6 L815.6,201.4 V208.4 H807.4Z" fill="none" stroke="#c4c4c4" stroke-width="1.1" stroke-linejoin="round"/><path d="M812.4,198.6 V201.6 H815.4" fill="none" stroke="#c4c4c4" stroke-width="0.9"/></g><path d="M798.6,226.4 l3.5,3.6 l3.5,-3.6" fill="none" stroke="#707070" stroke-width="1"/><g transform="translate(0,0)" ><rect x="809" y="253" width="5" height="6" rx="2.4" fill="none" stroke="#b0b0b0" stroke-width="1.1"/><rect x="809" y="257.6" width="5" height="6" rx="2.4" fill="none" stroke="#b0b0b0" stroke-width="1.1"/><path d="M811.5,256 v4.6" stroke="#b0b0b0" stroke-width="1.1"/></g><g transform="translate(0,0)" ><rect x="852.4" y="287.4" width="10.4" height="13.4" fill="none" stroke="#8e8e8e" stroke-width="0.9"/><circle cx="857.6" cy="291.2" r="1.6" fill="#8e8e8e"/><path d="M854.6,300 v-4.2 q0,-1.6 1.6,-1.6 h2.8 q1.6,0 1.6,1.6 v4.2z" fill="#8e8e8e"/></g><g transform="translate(0,0)" ><rect x="872.4" y="289.4" width="12.4" height="9.4" fill="none" stroke="#c8c8c8" stroke-width="1"/><circle cx="878.6" cy="292.6" r="1.6" fill="#c8c8c8"/><path d="M875.4,298.4 v-2 q0,-1.7 1.6,-1.7 h3.2 q1.6,0 1.6,1.7 v2z" fill="#c8c8c8"/></g><g transform="translate(0,0)" ><path d="M1012.6,227 l2.8,-2.8 l2.8,2.8" fill="none" stroke="#5e5e5e" stroke-width="0.9"/><path d="M1012.6,334 l2.8,2.8 l2.8,-2.8" fill="none" stroke="#5e5e5e" stroke-width="0.9"/></g><g transform="translate(0,0)" ><circle cx="806" cy="402.6" r="2.9" fill="none" stroke="#c0c0c0" stroke-width="1.1"/><path d="M808.2,404.8 L811,407.8" stroke="#c0c0c0" stroke-width="1.5" stroke-linecap="round"/></g><path d="M857,402.2 l3.0,3 l3.0,-3" fill="none" stroke="#8a8a8a" stroke-width="1"/><g transform="translate(0,0)" ><rect x="875.4" y="399.4" width="9.6" height="7.4" fill="none" stroke="#b0b0b0" stroke-width="0.9"/><path d="M877,405.4 l1.6,-2 l1.2,1.4 l1.4,-2 l1.8,2.6z" fill="#b0b0b0"/></g><g transform="translate(899.5,403.6)" ><circle cx="0" cy="0" r="4.1" fill="none" stroke="#b0b0b0" stroke-width="0.9"/><path d="M-3.2,2.6 A4.1,4.1 0 0 0 3.2,-2.6 A6,6 0 0 0 -3.2,2.6z" fill="#b0b0b0"/><path d="M3.6,-2 A4.1,4.1 0 0 1 -2.8,3 z" fill="#b0b0b0"/></g><text x="919.1" y="407.3" text-anchor="middle" font-family="'Liberation Serif',serif" font-weight="bold" font-size="11.6" fill="#b0b0b0">T</text><g transform="translate(0,0)" ><rect x="934.4" y="400.4" width="7.4" height="6.6" fill="none" stroke="#b0b0b0" stroke-width="0.9"/><rect x="933.2" y="399.2" width="2" height="2" fill="#323232" stroke="#b0b0b0" stroke-width="0.7"/><rect x="933.2" y="406.2" width="2" height="2" fill="#323232" stroke="#b0b0b0" stroke-width="0.7"/><rect x="941" y="399.2" width="2" height="2" fill="#323232" stroke="#b0b0b0" stroke-width="0.7"/><rect x="941" y="406.2" width="2" height="2" fill="#323232" stroke="#b0b0b0" stroke-width="0.7"/></g><g transform="translate(0,0)" ><path d="M955.6,399.6 H959.4 L961.8,402 V407.6 H955.6Z" fill="none" stroke="#b0b0b0" stroke-width="0.9"/><path d="M959.2,399.8 V402.2 H961.6" fill="none" stroke="#b0b0b0" stroke-width="0.8"/><rect x="953.2" y="403.4" width="4.4" height="4.6" fill="#b0b0b0"/></g><g transform="translate(0,0)" ><rect x="971.9" y="397.4" width="6.8" height="11.6" rx="3.4" fill="#262626" stroke="#2b2b2b" stroke-width="0.6"/><circle cx="975.3" cy="399.3" r="3.3" fill="#9c9c9c"/></g><path d="M891,425.2 l2.8,2.8 l2.8,-2.8" fill="none" stroke="#484848" stroke-width="0.9"/><path d="M969.6,424.6 l2.7,2.7 l2.7,-2.7" fill="none" stroke="#484848" stroke-width="0.9"/><path d="M969.6,447.2 l2.7,2.7 l2.7,-2.7" fill="none" stroke="#484848" stroke-width="0.9"/><g transform="translate(0,0)" ><rect x="824.4" y="443.4" width="9.2" height="8.4" fill="none" stroke="#626262" stroke-width="0.9"/><rect x="825.0" y="444.0" width="2.05" height="1.85" fill="#626262"/><rect x="825.0" y="447.7" width="2.05" height="1.85" fill="#626262"/><rect x="827.05" y="445.85" width="2.05" height="1.85" fill="#626262"/><rect x="827.05" y="449.55" width="2.05" height="1.85" fill="#626262"/><rect x="829.1" y="444.0" width="2.05" height="1.85" fill="#626262"/><rect x="829.1" y="447.7" width="2.05" height="1.85" fill="#626262"/><rect x="831.15" y="445.85" width="2.05" height="1.85" fill="#626262"/><rect x="831.15" y="449.55" width="2.05" height="1.85" fill="#626262"/></g><g transform="translate(0,0)" ><path d="M851.8,442.8 L847,449.4 L845.4,448.2Z" fill="#626262" stroke="#626262" stroke-width="0.6" stroke-linejoin="round"/><path d="M846.4,450 c0.6,1.6 -0.6,2.8 -2,3 c-1,0.2 -1.8,0.1 -2.6,0.1 c0.9,-0.6 1,-1.4 1.3,-2.4 c0.4,-1.2 1.6,-1.8 2.4,-1.6z" fill="#626262"/></g><g transform="translate(864,447.8)" ><path d="M0,-3.4V3.4M-3.4,0H3.4" stroke="#626262" stroke-width="0.9" fill="none"/><path d="M0,-5.2 l1.8,2.1 h-3.6z M0,5.2 l1.8,-2.1 h-3.6z M-5.2,0 l2.1,-1.8 v3.6z M5.2,0 l-2.1,-1.8 v3.6z" fill="#626262"/></g><g transform="translate(0,0)" ><path d="M876.4,445.6 H885.4 V453.6 M879.4,442.6 V451 H888.2" fill="none" stroke="#626262" stroke-width="0.9"/><path d="M883.4,445.8 l2,2" stroke="#626262" stroke-width="0.8"/><path d="M886.2,443.4 l1.2,1.2" stroke="#626262" stroke-width="0.7"/></g><g transform="translate(0,0)" ><rect x="896" y="446.6" width="8" height="6" rx="0.6" fill="#626262"/><path d="M897.8,446.8 V445 a2.2,2.2 0 0 1 4.4,0 V446.8" fill="none" stroke="#626262" stroke-width="1.1"/><rect x="899.3" y="448.6" width="1.4" height="1.8" fill="#323232"/></g><g transform="translate(806,472.5)" ><path d="M-5.2,0 Q0,-6.6 5.2,0 Q0,6.6 -5.2,0z" fill="#b8b8b8"/><circle cx="0" cy="0" r="2.2" fill="#323232"/><circle cx="0.1" cy="0" r="1.1" fill="#b8b8b8" opacity="0.55"/></g><g transform="translate(838.5,490.5)" ><path d="M-5.2,0 Q0,-6.6 5.2,0 Q0,6.6 -5.2,0z" fill="#b8b8b8"/><circle cx="0" cy="0" r="2.2" fill="#323232"/><circle cx="0.1" cy="0" r="1.1" fill="#b8b8b8" opacity="0.55"/></g><g transform="translate(852,505.5)" ><path d="M-5.2,0 Q0,-6.6 5.2,0 Q0,6.6 -5.2,0z" fill="#e4e4e4"/><circle cx="0" cy="0" r="2.2" fill="#555555"/><circle cx="0.1" cy="0" r="1.1" fill="#e4e4e4" opacity="0.55"/></g><g transform="translate(806,524.6)" ><path d="M-5.2,0 Q0,-6.6 5.2,0 Q0,6.6 -5.2,0z" fill="#b8b8b8"/><circle cx="0" cy="0" r="2.2" fill="#323232"/><circle cx="0.1" cy="0" r="1.1" fill="#b8b8b8" opacity="0.55"/></g><text x="834.1" y="476.3" text-anchor="middle" font-family="'Liberation Serif',serif" font-weight="bold" font-size="11.6" fill="#aaaaaa">T</text><g transform="translate(0,0)" ><path d="M1001.8,474.2 l2.7,-2.7 l2.7,2.7" fill="none" stroke="#8c8c8c" stroke-width="0.9"/></g><g transform="translate(0,0)" ><rect x="987" y="523.4" width="8" height="6.2" rx="0.6" fill="none" stroke="#9c9c9c" stroke-width="0.9"/><path d="M988.8,523.4 V522 a2.2,2.2 0 0 1 4.4,0 V523.4" fill="none" stroke="#9c9c9c" stroke-width="0.9"/><rect x="990.4" y="525.6" width="1.2" height="1.8" fill="#9c9c9c"/></g><g transform="translate(0,0)" ><rect x="859.4" y="560.4" width="6" height="5" rx="2.5" fill="none" stroke="#5a5a5a" stroke-width="0.9"/><rect x="864" y="560.4" width="6" height="5" rx="2.5" fill="none" stroke="#5a5a5a" stroke-width="0.9"/><path d="M862.6,562.9 h4.4" stroke="#5a5a5a" stroke-width="0.9"/></g><g transform="translate(0,0)" ><rect x="902.2" y="559" width="10.6" height="7.2" fill="#5a5a5a"/><ellipse cx="907.5" cy="562.6" rx="2.6" ry="2.2" fill="#323232"/></g><g transform="translate(929.4,562.6)" ><circle cx="0" cy="0" r="4.1" fill="none" stroke="#a2a2a2" stroke-width="0.9"/><path d="M2.9,-2.9 A4.1,4.1 0 0 1 -2.9,2.9 A7,7 0 0 1 2.9,-2.9z" fill="#a2a2a2"/><path d="M3,5.2 h2.6 l-1.3,1.6z" fill="#a2a2a2"/></g><g transform="translate(0,0)" ><path d="M946.2,558.4 h3.8 l1,1.2 h5.2 v6.8 h-10z" fill="#a2a2a2"/></g><g transform="translate(0,0)" ><rect x="969" y="558.4" width="8.6" height="8.4" fill="none" stroke="#a2a2a2" stroke-width="1"/><path d="M971.2,562.6 h4.2 M973.3,560.5 v4.2" stroke="#a2a2a2" stroke-width="1.1"/></g><g transform="translate(0,0)" ><path d="M989.6,560.6 h8.8 M992.2,560.4 v-1.7 q0,-0.5 0.5,-0.5 h2.6 q0.5,0 0.5,0.5 v1.7" fill="none" stroke="#5a5a5a" stroke-width="0.9"/><rect x="990.8" y="560.8" width="6.4" height="7" fill="none" stroke="#5a5a5a" stroke-width="0.9"/><path d="M993,562.4 v4 M995.1,562.4 v4" stroke="#5a5a5a" stroke-width="1.1"/></g></svg>
<svg class="i" style="left:0;top:0" width="1024" height="576" viewBox="0 0 1024 576"><polygon points="731,491.6 783.3,491.6 783.3,463.4 826,505.5 783.3,547.6 783.3,519.5 731,519.5" fill="#ff0030"/></svg>
</div>
</body></html>
